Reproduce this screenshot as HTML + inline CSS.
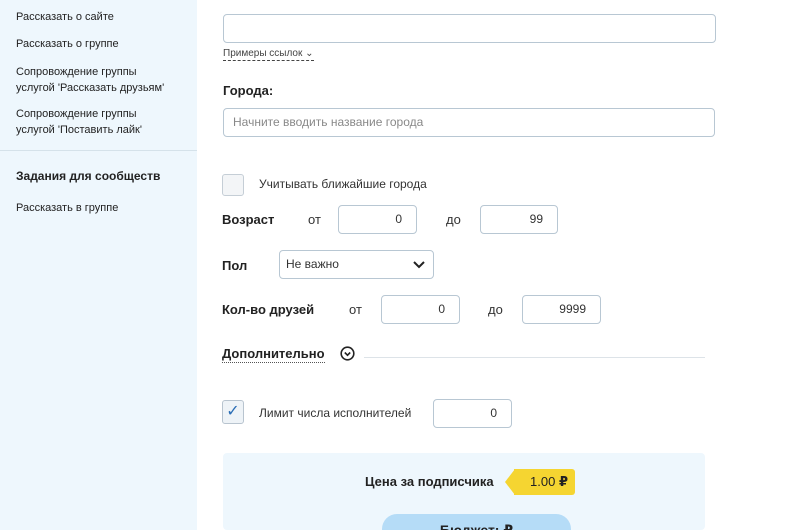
<!DOCTYPE html>
<html style="overflow:hidden;width:800px;height:530px"><head><meta charset="utf-8"><style>
*{box-sizing:border-box}
body{margin:0;width:800px;height:530px;overflow:hidden;background:#fff;font-family:"Liberation Sans","DejaVu Sans",sans-serif;color:#222;position:relative}
.side{position:absolute;left:0;top:0;width:197px;height:530px;background:#eef7fd}
.side div{position:absolute;left:16px;font-size:11px;line-height:16px;color:#222}
.hr{position:absolute;left:0;width:197px;top:150px;border-top:1px solid #d5e2ea}
.a{position:absolute}
.inp{position:absolute;border:1px solid #b8c7d3;border-radius:4px;background:#fff;font-size:12px;color:#333;text-align:right;padding-right:14px}
.lbl{position:absolute;font-size:13px;font-weight:bold}
.sm{position:absolute;font-size:12px;color:#333}
</style></head><body>
<div class="side">
<div style="top:9px">Рассказать о сайте</div>
<div style="top:36px">Рассказать о группе</div>
<div style="top:64px">Сопровождение группы<br>услугой 'Рассказать друзьям'</div>
<div style="top:106px">Сопровождение группы<br>услугой 'Поставить лайк'</div>
<div style="top:168px;font-weight:bold;font-size:12px">Задания для сообществ</div>
<div style="top:200px">Рассказать в группе</div>
</div>
<div class="hr"></div>
<div class="inp" style="left:223px;top:14px;width:493px;height:29px"></div>
<div class="a" style="left:223px;top:48px;font-size:10px;color:#444;border-bottom:1px dashed #444;line-height:12px">Примеры ссылок ⌄</div>
<div class="lbl" style="left:223px;top:83px">Города:</div>
<div class="inp" style="left:223px;top:108px;width:492px;height:29px;text-align:left;padding-left:9px;line-height:27px;color:#888">Начните вводить название города</div>
<div class="a" style="left:222px;top:174px;width:22px;height:22px;border:1px solid #c5ced6;border-radius:3px;background:#f3f5f7"></div>
<div class="sm" style="left:259px;top:177px">Учитывать ближайшие города</div>
<div class="lbl" style="left:222px;top:212px">Возраст</div>
<div class="sm" style="left:308px;top:212px;font-size:13px">от</div>
<div class="inp" style="left:338px;top:205px;width:79px;height:29px;line-height:27px">0</div>
<div class="sm" style="left:446px;top:212px;font-size:13px">до</div>
<div class="inp" style="left:480px;top:205px;width:78px;height:29px;line-height:27px">99</div>
<div class="lbl" style="left:222px;top:258px">Пол</div>
<div class="inp" style="left:279px;top:250px;width:155px;height:29px;line-height:27px;text-align:left;padding-left:6px">Не важно<svg style="position:absolute;right:8px;top:10px" width="12" height="8"><path d="M1 1l5 5 5-5" stroke="#222" stroke-width="2" fill="none"/></svg></div>
<div class="lbl" style="left:222px;top:302px">Кол-во друзей</div>
<div class="sm" style="left:349px;top:302px;font-size:13px">от</div>
<div class="inp" style="left:381px;top:295px;width:79px;height:29px;line-height:27px">0</div>
<div class="sm" style="left:488px;top:302px;font-size:13px">до</div>
<div class="inp" style="left:522px;top:295px;width:79px;height:29px;line-height:27px">9999</div>
<div class="lbl" style="left:222px;top:346px;border-bottom:1px dotted #555;line-height:16px">Дополнительно</div>
<svg class="a" style="left:340px;top:346px" width="15" height="15"><circle cx="7.5" cy="7.5" r="6.3" stroke="#222" stroke-width="1.6" fill="none"/><path d="M4.8 6.5l2.7 2.7 2.7-2.7" stroke="#222" stroke-width="1.6" fill="none"/></svg>
<div class="a" style="left:364px;top:357px;width:341px;border-top:1px solid #dde3e8"></div>
<div class="a" style="left:222px;top:400px;width:22px;height:24px;border:1px solid #b8c4cf;border-radius:3px;background:#eef3f7;color:#2a6db5;font-size:16px;text-align:center;line-height:22px">✓</div>
<div class="sm" style="left:259px;top:406px">Лимит числа исполнителей</div>
<div class="inp" style="left:433px;top:399px;width:79px;height:29px;line-height:27px">0</div>
<div class="a" style="left:223px;top:453px;width:482px;height:77px;background:#eef7fd;border-radius:4px"></div>
<div class="lbl" style="left:365px;top:474px">Цена за подписчика</div>
<div class="a" style="left:514px;top:469px;width:61px;height:26px;background:#f5d531;border-radius:0 3px 3px 0;font-size:13px;line-height:26px;text-align:right;padding-right:7px">1.00 <b>₽</b></div>
<div class="a" style="left:505px;top:469px;width:0;height:0;border-top:13px solid transparent;border-bottom:13px solid transparent;border-right:10px solid #f5d531"></div>
<div class="a" style="left:382px;top:514px;width:189px;height:16px;overflow:hidden;background:#b5dcf7;border-radius:15px 15px 0 0;text-align:center;font-size:14px;font-weight:bold;line-height:28px;padding-top:2px">Бюджет: ₽</div>
</body></html>
